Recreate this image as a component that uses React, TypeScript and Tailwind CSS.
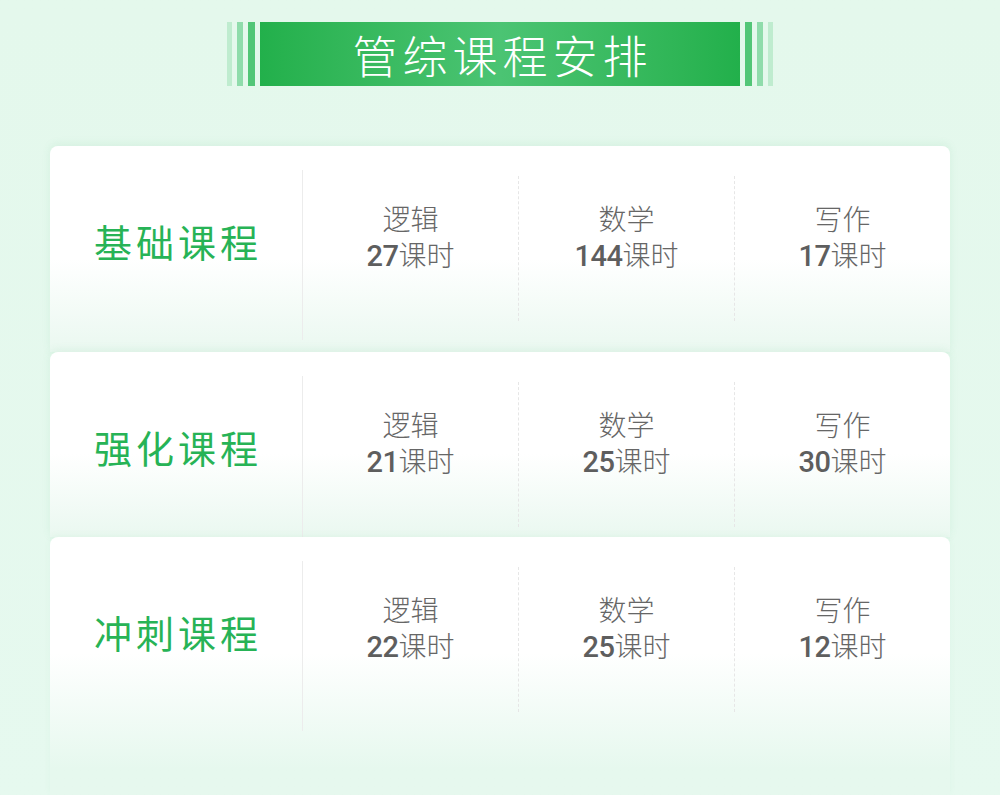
const rows = [
  { title: "基础课程", h: "h-[206px]", items: [["逻辑", "27"], ["数学", "144"], ["写作", "17"]] },
  { title: "强化课程", h: "h-[185px]", items: [["逻辑", "21"], ["数学", "25"], ["写作", "30"]] },
  { title: "冲刺课程", h: "h-[258px]", items: [["逻辑", "22"], ["数学", "25"], ["写作", "12"]] },
];

const cjk = "font-['Noto_Sans_CJK_SC',sans-serif]";

function Banner() {
  return (
    <div className="flex justify-center pt-[22px]">
      <div className="flex h-[64px] items-stretch">
        <div className="w-[5px] bg-[#bfeccf]" />
        <div className="ml-[5px] w-[6px] bg-[#8fdcab]" />
        <div className="ml-[5px] w-[7px] bg-[#52c677]" />
        <div className="ml-[5px] flex w-[480px] items-center justify-center bg-gradient-to-r from-[#22b04b] via-[#4bc473] to-[#22b04b]">
          <span className={`${cjk} text-[45px] font-light tracking-[5px] pl-[5px] text-white leading-none`}>
            管综课程安排
          </span>
        </div>
        <div className="ml-[5px] w-[7px] bg-[#52c677]" />
        <div className="ml-[5px] w-[6px] bg-[#8fdcab]" />
        <div className="ml-[5px] w-[5px] bg-[#bfeccf]" />
      </div>
    </div>
  );
}

function Row({ row, last }: { row: (typeof rows)[number]; last: boolean }) {
  return (
    <div
      className={`${row.h} flex rounded-t-[8px] bg-gradient-to-b from-white ${
        last
          ? "from-45% to-[#e6f8ee] to-90% shadow-[0_-2px_6px_rgba(80,180,120,0.06)]"
          : "from-55% to-[#eaf8f0] shadow-[0_-2px_8px_rgba(80,180,120,0.10)]"
      }`}
    >
      <div className="flex w-[252px] items-start justify-center pt-[76px]">
        <span className={`${cjk} text-[38px] font-normal tracking-[4px] pl-[4px] text-[#27b356] leading-none`}>
          {row.title}
        </span>
      </div>
      <div className="mt-[24px] h-[170px] w-px bg-[#ececec]" />
      {row.items.map(([name, n], i) => (
        <div key={name} className="flex">
          {i > 0 && <div className="mt-[30px] h-[145px] border-l border-dashed border-[#e6e6e6]" />}
          <div className="flex w-[215px] flex-col items-center pt-[56px] text-[#666]">
            <span className={`${cjk} text-[28px] font-light leading-[33px]`}>{name}</span>
            <span className="mt-[3px] flex items-baseline leading-[33px]">
              <span className="font-['Roboto',sans-serif] text-[29px] font-medium tracking-[-0.5px] text-[#5e5e5e]">{n}</span>
              <span className={`${cjk} text-[28px] font-light`}>课时</span>
            </span>
          </div>
        </div>
      ))}
    </div>
  );
}

export default function App() {
  return (
    <div className="h-[795px] w-[1000px] overflow-hidden bg-gradient-to-b from-[#e4f8ec] to-[#e6f9ef]">
      <Banner />
      <div className="mx-[50px] mt-[60px] flex flex-col">
        {rows.map((r, i) => (
          <Row key={r.title} row={r} last={i === rows.length - 1} />
        ))}
      </div>
    </div>
  );
}
